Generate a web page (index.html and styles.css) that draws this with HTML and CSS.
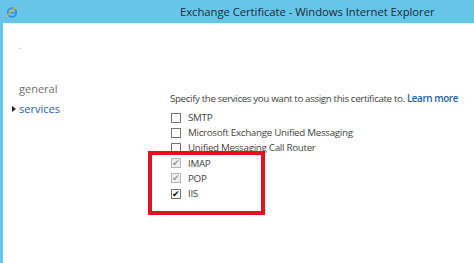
FILE: index.html
```html
<!DOCTYPE html>
<html lang="en">
<head>
  <meta charset="UTF-8">
  <title>Exchange Certificate</title>
  <link rel="stylesheet" href="styles.css">
</head>
<body>
  <div class="window">
    <div class="titlebar">
      <svg class="ie-logo" width="12" height="12" viewBox="0 0 12 12">
        <circle cx="6" cy="6.5" r="4.3" fill="none" stroke="#3b8fd6" stroke-width="1.8"/>
        <path d="M2 6.8 H10" stroke="#3b8fd6" stroke-width="1.4"/>
        <path d="M0.8 10.5 C3 7 8 2 11.2 1.2" fill="none" stroke="#e9b823" stroke-width="1.2"/>
      </svg>
      <span class="title">Exchange Certificate - Windows Internet Explorer</span>
    </div>

    <div class="content">
      <div class="dot">.</div>
      <div class="main">
        <ul class="nav">
          <li>general</li>
          <li class="active">services</li>
        </ul>

        <div class="panel">
          <p class="intro">Specify the services you want to assign this certificate to. <a href="#">Learn more</a></p>
          <ul class="services">
            <li><span class="box"></span>SMTP</li>
            <li><span class="box"></span>Microsoft Exchange Unified Messaging</li>
            <li><span class="box"></span>Unified Messaging Call Router</li>
            <li><span class="box checked dim">&#10004;</span>IMAP</li>
            <li><span class="box checked dim">&#10004;</span>POP</li>
            <li><span class="box checked">&#10004;</span>IIS</li>
          </ul>
          <div class="highlight"></div>
        </div>
      </div>
    </div>
  </div>
</body>
</html>
```

FILE: styles.css
```css
* { box-sizing: border-box; }

body {
  margin: 0;
  font-family: 'Open Sans', 'Noto Sans', sans-serif;
  background: #fff;
  color: #333;
}

.window {
  width: 474px;
  height: 263px;
  background: #66c6ea;
  padding-left: 3px;
  display: flex;
  flex-direction: column;
  overflow: hidden;
}

.titlebar {
  height: 23px;
  display: flex;
  align-items: center;
  padding-left: 3px;
}

.ie-logo {
  margin-top: 1px;
}

.title {
  margin-left: 162px;
  font-size: 11.3px;
  color: #1b2a33;
  letter-spacing: -0.05px;
}

.content {
  flex: 1;
  background: #fff;
  padding-top: 18px;
}

.dot {
  font-size: 9px;
  color: #999;
  margin-left: 16px;
  height: 39px;
  line-height: 10px;
}

.main {
  display: flex;
}

.nav {
  list-style: none;
  margin: 0;
  padding: 0 0 0 16px;
  width: 167px;
  font-size: 11px;
}

.nav li {
  height: 20px;
  line-height: 18px;
  color: #6f6f6f;
  position: relative;
}

.nav li.active {
  color: #1d63a8;
}

.nav li.active::before {
  content: '';
  position: absolute;
  left: -7px;
  top: 6px;
  border-left: 4px solid #222;
  border-top: 3px solid transparent;
  border-bottom: 3px solid transparent;
}

.panel {
  position: relative;
  padding-top: 12px;
  font-size: 9.8px;
  color: #444;
  letter-spacing: -0.3px;
}

.intro {
  margin: 0 0 4px 0;
  line-height: 14px;
  white-space: nowrap;
  letter-spacing: -0.38px;
}

.intro a {
  color: #1d63a8;
  font-weight: 600;
  text-decoration: none;
}

.services {
  list-style: none;
  margin: 0;
  padding: 0 0 0 1px;
}

.services li {
  height: 15.2px;
  display: flex;
  align-items: center;
}

.box {
  width: 10px;
  height: 10px;
  border: 1px solid #777;
  background: #fff;
  margin-right: 7px;
  font-size: 9px;
  line-height: 8px;
  text-align: center;
  color: #111;
  letter-spacing: 0;
}

.box.dim {
  border-color: #b5b5b5;
  background: #eee;
  color: #9c9c9c;
}

.highlight {
  position: absolute;
  left: -22px;
  top: 71px;
  width: 117px;
  height: 64px;
  border: 4px solid #e3131e;
}
```
